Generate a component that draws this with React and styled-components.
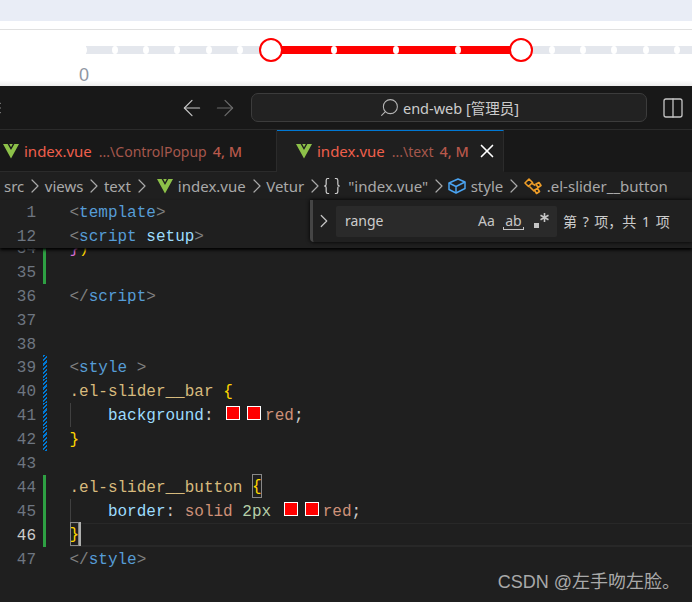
import React from "react"
import styled, { createGlobalStyle } from "styled-components"
import { ArrowLeft, ArrowRight, Braces, ChevronRight, Columns2, Menu, Search, X } from "lucide-react"

const UI_FONT = `"Noto Sans", "Noto Sans CJK SC", sans-serif`
const CODE_FONT = `"Liberation Mono", "DejaVu Sans Mono", monospace`

const c = {
  punct: "#808080",
  tag: "#569cd6",
  attr: "#9cdcfe",
  selector: "#d7ba7d",
  brace: "#ffd700",
  value: "#ce9178",
  num: "#b5cea8",
  plain: "#cccccc",
  pink: "#da70d6",
}

const stops = [84, 115, 146, 177, 209, 240, 334, 396, 458, 552, 583, 614, 646, 677]

const tag = (open, name, close) => [[open, c.punct], [name, c.tag], [close, c.punct]]

const lines = [
  { no: 34, mark: "green", tokens: [["}", c.pink], [")", c.brace]] },
  { no: 35, mark: "green", tokens: [] },
  { no: 36, tokens: tag("</", "script", ">") },
  { no: 37, tokens: [] },
  { no: 38, tokens: [] },
  { no: 39, mark: "blue", tokens: tag("<", "style", " >") },
  { no: 40, mark: "blue", tokens: [[".el-slider__bar ", c.selector], ["{", c.brace]] },
  {
    no: 41,
    mark: "blue",
    indent: true,
    tokens: [["background", c.attr], [": ", c.plain]],
    swatch: true,
    after: [["red", c.value], [";", c.plain]],
  },
  { no: 42, mark: "blue", tokens: [["}", c.brace]] },
  { no: 43, tokens: [] },
  { no: 44, mark: "green", tokens: [[".el-slider__button ", c.selector]], bracket: "{" },
  {
    no: 45,
    mark: "green",
    indent: true,
    tokens: [["border", c.attr], [": ", c.plain], ["solid ", c.value], ["2px", c.num], [" ", c.plain]],
    swatch: true,
    after: [["red", c.value], [";", c.plain]],
  },
  { no: 46, mark: "green", current: true, tokens: [], bracket: "}", cursor: true },
  { no: 47, tokens: tag("</", "style", ">") },
]

const VueIcon = () => (
  <svg width="16" height="15" viewBox="0 0 16 15">
    <path fill="#8dc149" fillRule="evenodd" d="M0 0h4.6L8 6l3.4-6H16L8 14.5zM6.2 0h3.6L8 3.2z" />
  </svg>
)

const ClassIcon = () => (
  <svg width="18" height="17" viewBox="0 0 18 17" fill="none" stroke="#ee9d28" strokeWidth="1.6" strokeLinejoin="round">
    <path d="M1 5l4-4 3.5 3.5-4 4z" />
    <path d="M8 5.5l3.5 2M5.5 8.5l5 5" />
    <path d="M12 6l3-1.5 2 3-3 2zM10.500 12l3-1.500 2 3-3 2z" />
  </svg>
)

const CubeIcon = () => (
  <svg width="18" height="16" viewBox="0 0 18 16" fill="none" stroke="#4aa3f0" strokeWidth="1.5" strokeLinejoin="round">
    <path d="M10 1l7 3v6.500L8 15l-7-3.500V5z" />
    <path d="M1 5l7 3.500L17 4M8 8.500V15" />
  </svg>
)

const RegexIcon = () => (
  <svg width="17" height="16" viewBox="0 0 17 16">
    <rect x="1" y="11" width="5" height="5" fill="#c5c5c5" />
    <path stroke="#c5c5c5" strokeWidth="1.6" d="M11.500 1v9M7.500 3.200l8 4.600M15.500 3.200l-8 4.600" />
  </svg>
)

const Crumb = ({ children }) => (
  <>
    {children}
    <Sep><ChevronRight size={24} strokeWidth={1.2} /></Sep>
  </>
)

const CodeLine = ({ line }) => (
  <Row>
    <LineNo $current={line.current}>{line.no}</LineNo>
    <Gutter $mark={line.mark} />
    <Code $current={line.current}>
      {line.indent && <Indent />}
      {line.tokens.map(([text, color], i) => (
        <Tok key={i} $color={color}>{text}</Tok>
      ))}
      {line.swatch && (
        <>
          <Swatch />
          <Swatch />
        </>
      )}
      {line.after && line.after.map(([text, color], i) => (
        <Tok key={i} $color={color}>{text}</Tok>
      ))}
      {line.bracket && <Bracket $cursor={line.cursor}>{line.bracket}</Bracket>}
    </Code>
  </Row>
)

const App = () => (
  <Page>
    <GlobalStyle />
    <TopBand />
    <SliderPanel>
      <Track>
        {stops.map(x => <Stop key={x} $x={x - 86} />)}
        <ActiveBar />
        <Handle $x={173} />
        <Handle $x={423} />
      </Track>
      <SliderLabel>0</SliderLabel>
    </SliderPanel>

    <TitleBar>
      <MenuSlot><Menu size={16} strokeWidth={1.4} /></MenuSlot>
      <NavButton><ArrowLeft size={26} strokeWidth={1.1} /></NavButton>
      <NavButton $dim><ArrowRight size={26} strokeWidth={1.1} /></NavButton>
      <CommandBox>
        <MirrorIcon><Search size={21} strokeWidth={1.2} /></MirrorIcon>
        end-web [管理员]
      </CommandBox>
      <LayoutButton><Columns2 size={24} strokeWidth={1.3} /></LayoutButton>
    </TitleBar>

    <TabStrip>
      <Tab $width={277}>
        <VueIcon />
        <TabName>index.vue</TabName>
        <TabPath>...\ControlPopup</TabPath>
        <TabBadge>4, M</TabBadge>
      </Tab>
      <Tab $active $width={227}>
        <VueIcon />
        <TabName>index.vue</TabName>
        <TabPath>...\text</TabPath>
        <TabBadge>4, M</TabBadge>
        <TabClose><X size={22} strokeWidth={1.8} /></TabClose>
      </Tab>
    </TabStrip>

    <Breadcrumbs>
      <Crumb>src</Crumb>
      <Crumb>views</Crumb>
      <Crumb>text</Crumb>
      <CrumbIcon $left={5.5} $right={5}><VueIcon /></CrumbIcon>
      <Crumb>index.vue</Crumb>
      <Crumb>Vetur</Crumb>
      <CrumbIcon $left={-2.5} $right={6} $color="#d4d4d4"><Braces size={20} strokeWidth={1.4} /></CrumbIcon>
      <Crumb>"index.vue"</Crumb>
      <CrumbIcon $left={-1} $right={5}><CubeIcon /></CrumbIcon>
      <Crumb>style</Crumb>
      <CrumbIcon $left={0} $right={5}><ClassIcon /></CrumbIcon>
      .el-slider__button
    </Breadcrumbs>

    <EditorArea>
      <StickyLines>
        <Row>
          <LineNo>1</LineNo>
          <Gutter />
          <Code>
            <Tok $color={c.punct}>{"<"}</Tok>
            <Tok $color={c.tag}>template</Tok>
            <Tok $color={c.punct}>{">"}</Tok>
          </Code>
        </Row>
        <Row>
          <LineNo>12</LineNo>
          <Gutter />
          <Code>
            <Tok $color={c.punct}>{"<"}</Tok>
            <Tok $color={c.tag}>script</Tok>
            <Tok $color={c.attr}> setup</Tok>
            <Tok $color={c.punct}>{">"}</Tok>
          </Code>
        </Row>
      </StickyLines>

      <FindWidget>
        <FindToggle><ChevronRight size={22} strokeWidth={1.3} /></FindToggle>
        <FindInput>
          <FindValue>range</FindValue>
          <FindOption>Aa</FindOption>
          <WordOption>ab</WordOption>
          <RegexSlot><RegexIcon /></RegexSlot>
        </FindInput>
        <FindCount>第 ? 项，共 1 项</FindCount>
      </FindWidget>

      <ScrollArea>
        <ScrollInner>
          {lines.map(line => <CodeLine key={line.no} line={line} />)}
        </ScrollInner>
      </ScrollArea>

      <Watermark>CSDN @左手吻左脸。</Watermark>
    </EditorArea>
  </Page>
)

export default App

const GlobalStyle = createGlobalStyle`
  html, body {
    margin: 0;
    padding: 0;
    background: #1f1f1f;
  }
`

const Page = styled.div`
  width: 692px;
  height: 602px;
  overflow: hidden;
  display: flex;
  flex-direction: column;
  font-family: ${UI_FONT};
`

const TopBand = styled.div`
  height: 21px;
  flex: none;
  background: #e9edf6;
  border-bottom: 8px solid #ffffff;
  box-sizing: content-box;
`

const SliderPanel = styled.div`
  height: 57px;
  flex: none;
  box-sizing: border-box;
  background: linear-gradient(#ffffff 50px, #ececec 56px);
  border-top: 1px solid #e0e0e0;
  padding-top: 16px;
  overflow: hidden;
`

const Track = styled.div`
  position: relative;
  height: 8px;
  margin-left: 86px;
  background: #e4e7ed;
`

const Stop = styled.span`
  position: absolute;
  top: 0;
  left: ${p => p.$x - 3}px;
  width: 6px;
  height: 8px;
  border-radius: 50%;
  background: #ffffff;
  z-index: 1;
`

const ActiveBar = styled.div`
  position: absolute;
  top: 0;
  left: 185px;
  width: 250px;
  height: 8px;
  background: #ff0000;
`

const Handle = styled.span`
  position: absolute;
  top: -8px;
  left: ${p => p.$x}px;
  width: 24px;
  height: 24px;
  box-sizing: border-box;
  border: 2px solid #ff0000;
  border-radius: 50%;
  background: #ffffff;
  z-index: 2;
`

const SliderLabel = styled.div`
  margin: 11px 0 0 79px;
  font: 18px/20px "Liberation Sans", sans-serif;
  color: #8f96a3;
`

const TitleBar = styled.div`
  height: 43px;
  flex: none;
  box-sizing: content-box;
  display: flex;
  align-items: center;
  background: #181818;
  border-bottom: 1px solid #2b2b2b;
  color: #cccccc;
`

const MenuSlot = styled.div`
  display: flex;
  margin-left: -13px;
  margin-right: 176px;
  color: #bbbbbb;
`

const NavButton = styled.div`
  display: flex;
  width: 33px;
  color: ${p => (p.$dim ? "#6b6b6b" : "#c5c5c5")};
`

const CommandBox = styled.div`
  width: 396px;
  height: 29px;
  margin-left: 6px;
  box-sizing: border-box;
  display: flex;
  align-items: center;
  justify-content: center;
  gap: 3px;
  background: #222222;
  border: 1px solid #3c3c3c;
  border-radius: 7px;
  font-size: 14.5px;
  color: #cccccc;
`

const MirrorIcon = styled.span`
  display: flex;
  transform: scaleX(-1);
  color: #b5b5b5;
`

const LayoutButton = styled.div`
  display: flex;
  margin-left: 14px;
  color: #c5c5c5;
`

const TabStrip = styled.div`
  height: 42px;
  flex: none;
  display: flex;
  background: #181818;
`

const Tab = styled.div`
  width: ${p => p.$width}px;
  box-sizing: border-box;
  display: flex;
  align-items: center;
  padding-left: ${p => (p.$active ? 19 : 3)}px;
  background: ${p => (p.$active ? "#1f1f1f" : "#181818")};
  border-top: 1px solid ${p => (p.$active ? "#0078d4" : "#181818")};
  border-right: 1px solid #2b2b2b;
  border-bottom: 1px solid ${p => (p.$active ? "#1f1f1f" : "#2b2b2b")};
`

const TabName = styled.span`
  margin-left: 5px;
  font-size: 15px;
  color: #ef5f4c;
`

const TabPath = styled.span`
  margin-left: 7px;
  font-size: 14px;
  color: #a5574c;
`

const TabBadge = styled.span`
  margin-left: 6px;
  font-size: 14.5px;
  font-weight: 500;
  color: #b9584b;
`

const TabClose = styled.span`
  display: flex;
  margin-left: 7px;
  color: #ffffff;
`

const Breadcrumbs = styled.div`
  height: 28px;
  flex: none;
  display: flex;
  align-items: center;
  padding-left: 4px;
  background: #1f1f1f;
  font-size: 15px;
  white-space: nowrap;
  color: #a9a9a9;
`

const Sep = styled.span`
  display: flex;
  margin: 0 -2.5px 0 -1px;
  color: #a9a9a9;
`

const CrumbIcon = styled.span`
  display: flex;
  margin-left: ${p => p.$left}px;
  margin-right: ${p => p.$right}px;
  color: ${p => p.$color || "inherit"};
`

const EditorArea = styled.div`
  position: relative;
  flex: 1;
  min-height: 0;
  display: flex;
  flex-direction: column;
  background: #1f1f1f;
`

const StickyLines = styled.div`
  position: relative;
  z-index: 2;
  flex: none;
  height: 48px;
  background: #1f1f1f;
  box-shadow: 0 2px 3px #000000;
`

const ScrollArea = styled.div`
  flex: 1;
  min-height: 0;
  overflow: hidden;
`

const ScrollInner = styled.div`
  margin-top: -12px;
`

const Row = styled.div`
  display: flex;
  height: 23.9px;
  font: 16px/26px ${CODE_FONT};
`

const LineNo = styled.div`
  width: 36px;
  flex: none;
  text-align: right;
  color: ${p => (p.$current ? "#cccccc" : "#6e7681")};
`

const Gutter = styled.div`
  width: 4px;
  flex: none;
  margin: 0 22.5px 0 7px;
  background: ${p =>
    p.$mark === "green"
      ? "linear-gradient(90deg, #2ea043 3px, transparent 3px)"
      : p.$mark === "blue"
      ? "repeating-linear-gradient(-45deg, #0078d4 0 1.5px, transparent 1.5px 3px)"
      : "none"};
`

const Code = styled.div`
  flex: 1;
  display: flex;
  align-items: flex-start;
  white-space: pre;
  box-shadow: ${p => (p.$current ? "inset 0 1px 0 #282828, inset 0 -2px 0 #282828" : "none")};
`

const Tok = styled.span`
  color: ${p => p.$color};
`

const Indent = styled.span`
  width: 38.4px;
  height: 23.9px;
  box-sizing: border-box;
  border-left: 1px solid #404040;
`

const Swatch = styled.span`
  width: 14px;
  height: 14px;
  box-sizing: border-box;
  margin: 3px 7px 0 3px;
  background: #ff0000;
  border: 1px solid #ffffff;

  & + & {
    margin: 3px 4px 0 0;
  }
`

const Bracket = styled.span`
  height: 24px;
  margin-top: -1px;
  line-height: 27px;
  color: ${c.brace};
  outline: 1px solid #888888;
  outline-offset: -1px;
  box-shadow: ${p => (p.$cursor ? "2px 0 0 #aeafad" : "none")};
`

const FindWidget = styled.div`
  position: absolute;
  top: 0;
  left: 310px;
  right: 0;
  height: 42px;
  z-index: 3;
  box-sizing: border-box;
  display: flex;
  align-items: center;
  background: #202020;
  border-left: 3px solid #454545;
  border-bottom-left-radius: 4px;
  box-shadow: 0 0 4px #000000;
`

const FindToggle = styled.div`
  display: flex;
  width: 23px;
  color: #c5c5c5;
`

const FindInput = styled.div`
  width: 221px;
  height: 31px;
  box-sizing: border-box;
  display: flex;
  align-items: center;
  padding: 0 7px 2px 9px;
  background: #2a2a2a;
  border-radius: 2px;
  font-size: 14px;
  color: #cccccc;
`

const FindValue = styled.span`
  flex: 1;
`

const FindOption = styled.span`
  width: 25px;
  font-size: 14px;
  color: #c5c5c5;
`

const WordOption = styled(FindOption)`
  position: relative;
  width: 21px;
  margin-right: 9px;
  text-align: center;

  &::after {
    content: "";
    position: absolute;
    left: 0;
    right: 0;
    bottom: 0;
    height: 2px;
    border: 1px solid #c5c5c5;
    border-top: none;
  }
`

const RegexSlot = styled.span`
  display: flex;
`

const FindCount = styled.span`
  margin-left: 6px;
  padding-bottom: 1px;
  font-size: 14px;
  word-spacing: 2px;
  color: #cccccc;
  white-space: nowrap;
`

const Watermark = styled.div`
  position: absolute;
  right: 12px;
  bottom: 9px;
  z-index: 4;
  font: 18px/22px "Liberation Sans", "Noto Sans CJK SC", sans-serif;
  color: #a9a9a9;
`
